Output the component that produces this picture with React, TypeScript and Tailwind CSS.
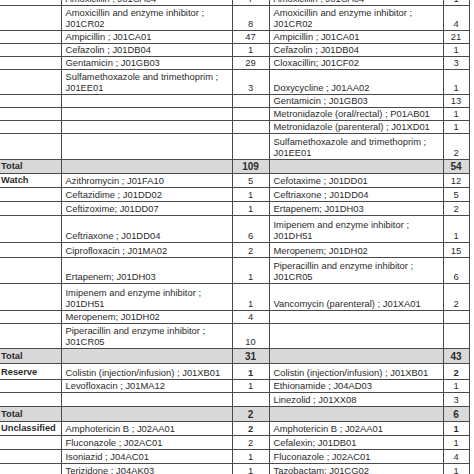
import React from "react";

type Txt = string | string[] | undefined;
type Row = {
  h: number;
  total?: boolean;
  label?: string;
  d1?: Txt;
  n1?: string;
  d2?: Txt;
  n2?: string;
  bold?: boolean;
};

const AMOX2 = ["Amoxicillin and enzyme inhibitor ;", "J01CR02"];
const SULFA = ["Sulfamethoxazole and trimethoprim ;", "J01EE01"];
const IMIP = ["Imipenem and enzyme inhibitor ;", "J01DH51"];
const PIP = ["Piperacillin and enzyme inhibitor ;", "J01CR05"];
const COL = "Colistin (injection/infusion) ; J01XB01";

const rows: Row[] = [
  { h: 14, d1: "Amoxicillin ; J01CA04", n1: "7", d2: "Amoxicillin ; J01CA04", n2: "1" },
  { h: 25, d1: AMOX2, n1: "8", d2: AMOX2, n2: "4" },
  { h: 13, d1: "Ampicillin ; J01CA01", n1: "47", d2: "Ampicillin ; J01CA01", n2: "21" },
  { h: 13, d1: "Cefazolin ; J01DB04", n1: "1", d2: "Cefazolin ; J01DB04", n2: "1" },
  { h: 13, d1: "Gentamicin ; J01GB03", n1: "29", d2: "Cloxacillin; J01CF02", n2: "3" },
  { h: 25, d1: SULFA, n1: "3", d2: "Doxycycline ; J01AA02", n2: "1" },
  { h: 13, d2: "Gentamicin ; J01GB03", n2: "13" },
  { h: 13, d2: "Metronidazole (oral/rectal) ; P01AB01", n2: "1" },
  { h: 13, d2: "Metronidazole (parenteral) ; J01XD01", n2: "1" },
  { h: 26, d2: SULFA, n2: "2" },
  { h: 14, total: true, label: "Total", n1: "109", n2: "54" },
  { h: 14, label: "Watch", d1: "Azithromycin ; J01FA10", n1: "5", d2: "Cefotaxime ; J01DD01", n2: "12" },
  { h: 14, d1: "Ceftazidime ; J01DD02", n1: "1", d2: "Ceftriaxone ; J01DD04", n2: "5" },
  { h: 14, d1: "Ceftizoxime; J01DD07", n1: "1", d2: "Ertapenem; J01DH03", n2: "2" },
  { h: 27, d1: "Ceftriaxone ; J01DD04", n1: "6", d2: IMIP, n2: "1" },
  { h: 15, d1: "Ciprofloxacin ; J01MA02", n1: "2", d2: "Meropenem; J01DH02", n2: "15" },
  { h: 26, d1: "Ertapenem; J01DH03", n1: "1", d2: PIP, n2: "6" },
  { h: 27, d1: IMIP, n1: "1", d2: "Vancomycin (parenteral) ; J01XA01", n2: "2" },
  { h: 13, d1: "Meropenem; J01DH02", n1: "4" },
  { h: 25, d1: PIP, n1: "10" },
  { h: 15, total: true, label: "Total", n1: "31", n2: "43" },
  { h: 16, label: "Reserve", d1: COL, n1: "1", d2: COL, n2: "2", bold: true },
  { h: 13, d1: "Levofloxacin ; J01MA12", n1: "1", d2: "Ethionamide ; J04AD03", n2: "1" },
  { h: 14, d2: "Linezolid ; J01XX08", n2: "3" },
  { h: 15, total: true, label: "Total", n1: "2", n2: "6" },
  { h: 14, label: "Unclassified", d1: "Amphotericin B ; J02AA01", n1: "2", d2: "Amphotericin B ; J02AA01", n2: "1", bold: true },
  { h: 14, d1: "Fluconazole ; J02AC01", n1: "2", d2: "Cefalexin; J01DB01", n2: "1" },
  { h: 14, d1: "Isoniazid ; J04AC01", n1: "1", d2: "Fluconazole ; J02AC01", n2: "4" },
  { h: 14, d1: "Terizidone ; J04AK03", n1: "1", d2: "Tazobactam; J01CG02", n2: "1" },
];

const H: Record<number, string> = {
  13: "h-[13px]",
  14: "h-[14px]",
  15: "h-[15px]",
  16: "h-[16px]",
  25: "h-[25px]",
  26: "h-[26px]",
  27: "h-[27px]",
};

const cell = "border border-[#4a4a4a] align-bottom pb-[1px] p-0";

function Drug({ t }: { t: Txt }) {
  if (!t) return null;
  if (Array.isArray(t))
    return (
      <>
        {t.map((l, i) => (
          <div key={i} className="whitespace-nowrap">
            {l}
          </div>
        ))}
      </>
    );
  return <div className="whitespace-nowrap">{t}</div>;
}

export default function App() {
  return (
    <div className="w-[474px] h-[474px] overflow-hidden bg-white">
      <table
        className="-mt-[9px] table-fixed border-collapse w-[469px] text-[9.4px] leading-[11px] text-[#2b2b2b]"
        style={{ fontFamily: '"Liberation Sans", Arial, sans-serif' }}
      >
        <colgroup>
          <col className="w-[61px]" />
          <col className="w-[171px]" />
          <col className="w-[37px]" />
          <col className="w-[174px]" />
          <col className="w-[26px]" />
        </colgroup>
        <tbody>
          {rows.map((r, i) => {
            const bg = r.total ? "bg-[#d9d9d9]" : "";
            const numW = r.total || r.bold ? "font-bold" : "";
            return (
              <tr key={i} className={`${H[r.h]} ${bg}`}>
                <td className={`${cell} border-l-0 pl-[1px] font-bold text-[9.3px]`}>
                  {r.label}
                </td>
                <td className={`${cell} pl-[4px]`}>
                  <Drug t={r.d1} />
                </td>
                <td className={`${cell} text-center ${numW} ${r.total ? "text-[10px]" : ""}`}>{r.n1}</td>
                <td className={`${cell} pl-[4px]`}>
                  <Drug t={r.d2} />
                </td>
                <td className={`${cell} text-center ${numW} ${r.total ? "text-[10px]" : ""}`}>{r.n2}</td>
              </tr>
            );
          })}
        </tbody>
      </table>
    </div>
  );
}
